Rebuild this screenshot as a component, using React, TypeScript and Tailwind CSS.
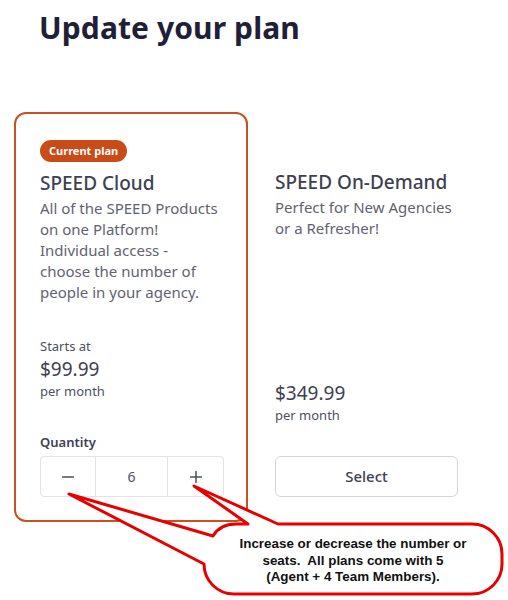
import React from "react";

function Minus() {
  return (
    <svg width="14" height="14" viewBox="0 0 14 14" fill="none" stroke="#4b5060" strokeWidth="1.5" strokeLinecap="round">
      <path d="M1.5 7h11" />
    </svg>
  );
}
function Plus() {
  return (
    <svg width="14" height="14" viewBox="0 0 14 14" fill="none" stroke="#4b5060" strokeWidth="1.5" strokeLinecap="round">
      <path d="M1.5 7h11M7 1.5v11" />
    </svg>
  );
}

export default function App() {
  return (
    <div className="relative w-[508px] h-[600px] bg-white overflow-hidden" style={{ fontFamily: '"Noto Sans", "Open Sans", sans-serif' }}>
      <h1 className="pl-[39px] pt-[9px] text-[30px] leading-[38px] font-bold text-[#1f2037] tracking-[0.1px]">Update your plan</h1>
      <div className="pl-[14px] pt-[65px] grid grid-cols-[234px_234px] gap-px">
        {/* Card 1 */}
        <div className="h-[410px] border-2 border-[#c9501f] rounded-[12px] pl-[24px] pr-[20px] pt-[26px] pb-[23px] flex flex-col">
          <div className="self-start h-[22px] px-[9px] rounded-full bg-[#c94b17] text-white text-[11px] font-bold leading-[22px]">Current plan</div>
          <div className="mt-[8px] text-[19px] leading-[26px] font-medium text-[#3d4152]">SPEED Cloud</div>
          <div className="mt-[2px] w-[180px] text-[15px] leading-[21px] text-[#5f6271]">All of the SPEED Products on one Platform! Individual access - choose the number of people in your agency.</div>
          <div className="mt-auto">
            <div className="text-[13px] leading-[20px] text-[#4d5162]">Starts at</div>
            <div className="text-[19px] leading-[26px] text-[#3d4152]">$99.99</div>
            <div className="text-[13px] leading-[18px] text-[#4d5162]">per month</div>
            <div className="mt-[32px] text-[13px] leading-[20px] font-semibold text-[#3d4152]">Quantity</div>
            <div className="mt-[4px] w-[184px] h-[41px] border border-[#e3e4e8] rounded-[4px] flex">
              <div className="w-[55px] flex items-center justify-center border-r border-[#e3e4e8]"><Minus /></div>
              <div className="w-[72px] flex items-center justify-center border-r border-[#e3e4e8] text-[14px] text-[#4b5060]">6</div>
              <div className="flex-1 flex items-center justify-center"><Plus /></div>
            </div>
          </div>
        </div>
        {/* Card 2 */}
        <div className="h-[410px] border-2 border-transparent rounded-[12px] pl-[24px] pr-[14px] pt-[55px] pb-[23px] flex flex-col">
          <div className="text-[19px] leading-[26px] font-medium text-[#3d4152]">SPEED On-Demand</div>
          <div className="mt-[2px] text-[15px] leading-[21px] text-[#5f6271]">Perfect for New Agencies or a Refresher!</div>
          <div className="mt-auto">
            <div className="text-[19px] leading-[26px] text-[#3d4152]">$349.99</div>
            <div className="text-[13px] leading-[18px] text-[#4d5162]">per month</div>
            <div className="mt-[32px] w-[183px] h-[41px] border border-[#d4d5dc] rounded-[6px] flex items-center justify-center text-[15px] font-medium text-[#3d4152]">Select</div>
          </div>
        </div>
      </div>

      {/* Callout annotation */}
      <svg className="absolute left-0 top-0 pointer-events-none" width="508" height="600" viewBox="0 0 508 600">
        <path
          d="M236 524 L248 524 L194 486 L278 524 L472 524 A30 30 0 0 1 502 554 L502 564 A30 30 0 0 1 472 594 L234 594 A30 30 0 0 1 204 564 L69 494 L213 536 Q220 524 236 524 Z"
          fill="#ffffff"
          stroke="#e60000"
          strokeWidth="3"
          strokeLinejoin="round"
        />
      </svg>
      <div
        className="absolute left-[204px] top-[536px] w-[298px] text-center text-[13.4px] leading-[16.5px] font-bold text-[#111111]"
        style={{ fontFamily: '"Liberation Sans", Arial, sans-serif' }}
      >
        Increase or decrease the number or<br />seats.&nbsp; All plans come with 5<br />(Agent + 4 Team Members).
      </div>
    </div>
  );
}
